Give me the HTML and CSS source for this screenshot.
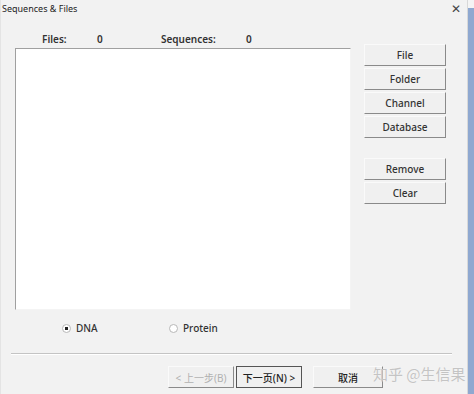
FILE: index.html
```html
<!DOCTYPE html>
<html>
  <head>
    <meta charset="UTF-8" />
    <title>Sequences & Files</title>
    <link rel="stylesheet" href="styles.css">
  </head>
  <body>
    <div class="dialog">
      <div class="titlebar">
        <span class="title">Sequences &amp; Files</span>
        <span class="close">&#x2715;</span>
      </div>

      <div class="content">
        <div class="left">
          <div class="counts">
            <span class="lbl lbl-files">Files:</span>
            <span class="num num-files">0</span>
            <span class="lbl lbl-seq">Sequences:</span>
            <span class="num">0</span>
          </div>
          <div class="listbox"></div>
        </div>

        <div class="side">
          <button class="btn">File</button>
          <button class="btn">Folder</button>
          <button class="btn">Channel</button>
          <button class="btn">Database</button>
          <button class="btn btn-gap">Remove</button>
          <button class="btn">Clear</button>
        </div>
      </div>

      <div class="radios">
        <label class="radio radio-dna"><span class="dot checked"></span>DNA</label>
        <label class="radio"><span class="dot"></span>Protein</label>
      </div>

      <div class="sep"></div>

      <div class="footer">
        <button class="wbtn disabled">&lt; 上一步(B)</button>
        <button class="wbtn default">下一页(N) &gt;</button>
        <button class="wbtn cancel">取消</button>
        <span class="watermark">知乎 @生信果</span>
      </div>
    </div>
    <div class="edge"></div>
  </body>
</html>
```

FILE: styles.css
```css
html, body {
  height: 100%;
}
body {
  margin: 0;
  display: flex;
  background: #f1f1f1;
  font-family: "Noto Sans", "Noto Sans CJK SC", sans-serif;
  font-size: 10px;
  color: #1a1a1a;
  overflow: hidden;
}

.dialog {
  position: relative;
  flex: 1;
  background: #f2f2f2;
  border-left: 1px solid #e4e4e4;
}

.titlebar {
  height: 16px;
  display: flex;
  align-items: center;
  justify-content: space-between;
  padding: 0 6px 0 1px;
}
.title {
  font-size: 9px;
  color: #222;
}
.close {
  font-size: 12px;
  color: #444;
}

.content {
  display: flex;
  padding: 14px 0 0 14px;
}
.left {
  width: 336px;
}
.counts {
  display: flex;
  height: 18px;
  align-items: center;
  font-weight: 600;
  color: #333;
}
.lbl-files {
  margin-left: 27px;
  width: 55px;
}
.num-files {
  width: 64px;
}
.lbl-seq {
  width: 85px;
}
.listbox {
  height: 260px;
  background: #ffffff;
  border-top: 1px solid #a0a0a0;
  border-left: 1px solid #a0a0a0;
  border-right: 1px solid #f4f4f4;
  border-bottom: 1px solid #f4f4f4;
}

.side {
  display: flex;
  flex-direction: column;
  gap: 2px;
  margin: 14px 0 0 13px;
}
.btn {
  width: 82px;
  height: 22px;
  padding: 0;
  font-family: inherit;
  font-size: 10px;
  font-weight: 500;
  color: #333;
  background: #f0f0f0;
  border-top: 1px solid #fafafa;
  border-left: 1px solid #fafafa;
  border-right: 1px solid #8a8a8a;
  border-bottom: 1px solid #8a8a8a;
}
.btn-gap {
  margin-top: 18px;
}

.radios {
  display: flex;
  align-items: center;
  height: 16px;
  margin-top: 10px;
  padding-left: 61px;
  font-weight: 500;
  color: #333;
}
.radio {
  display: flex;
  align-items: center;
}
.radio-dna {
  width: 107px;
}
.dot {
  width: 7px;
  height: 7px;
  margin-right: 5px;
  border-radius: 50%;
  border: 1px solid #b8b8b8;
  background: #ffffff;
  position: relative;
}
.dot.checked::after {
  content: "";
  position: absolute;
  left: 2px;
  top: 2px;
  width: 3px;
  height: 3px;
  background: #222;
}

.sep {
  height: 1px;
  margin: 17px 15px 0 10px;
  background: #c4c4c4;
  border-bottom: 1px solid #ffffff;
}

.footer {
  display: flex;
  padding: 11px 0 0 167px;
}
.wbtn {
  height: 22px;
  padding: 0;
  font-family: inherit;
  font-size: 10px;
  color: #222;
  background: #f0f0f0;
  border-top: 1px solid #fafafa;
  border-left: 1px solid #fafafa;
  border-right: 1px solid #8a8a8a;
  border-bottom: 1px solid #8a8a8a;
}
.disabled {
  width: 66px;
  color: #b0b0b0;
}
.default {
  width: 66px;
  margin-left: 2px;
  border: 1px solid #555;
  font-weight: 500;
}
.cancel {
  width: 70px;
  margin-left: 11px;
  font-weight: 500;
}

.watermark {
  position: absolute;
  left: 372px;
  bottom: 10px;
  font-family: "Noto Sans CJK SC", sans-serif;
  font-size: 15px;
  color: #c4c4c4;
  text-shadow: 0 0 1px #ffffff;
}

.edge {
  width: 6px;
  border-left: 1px solid #d8d8d8;
  background: linear-gradient(#f4f4f4 0, #f4f4f4 8px, #8fa8d0 8px);
}
```
